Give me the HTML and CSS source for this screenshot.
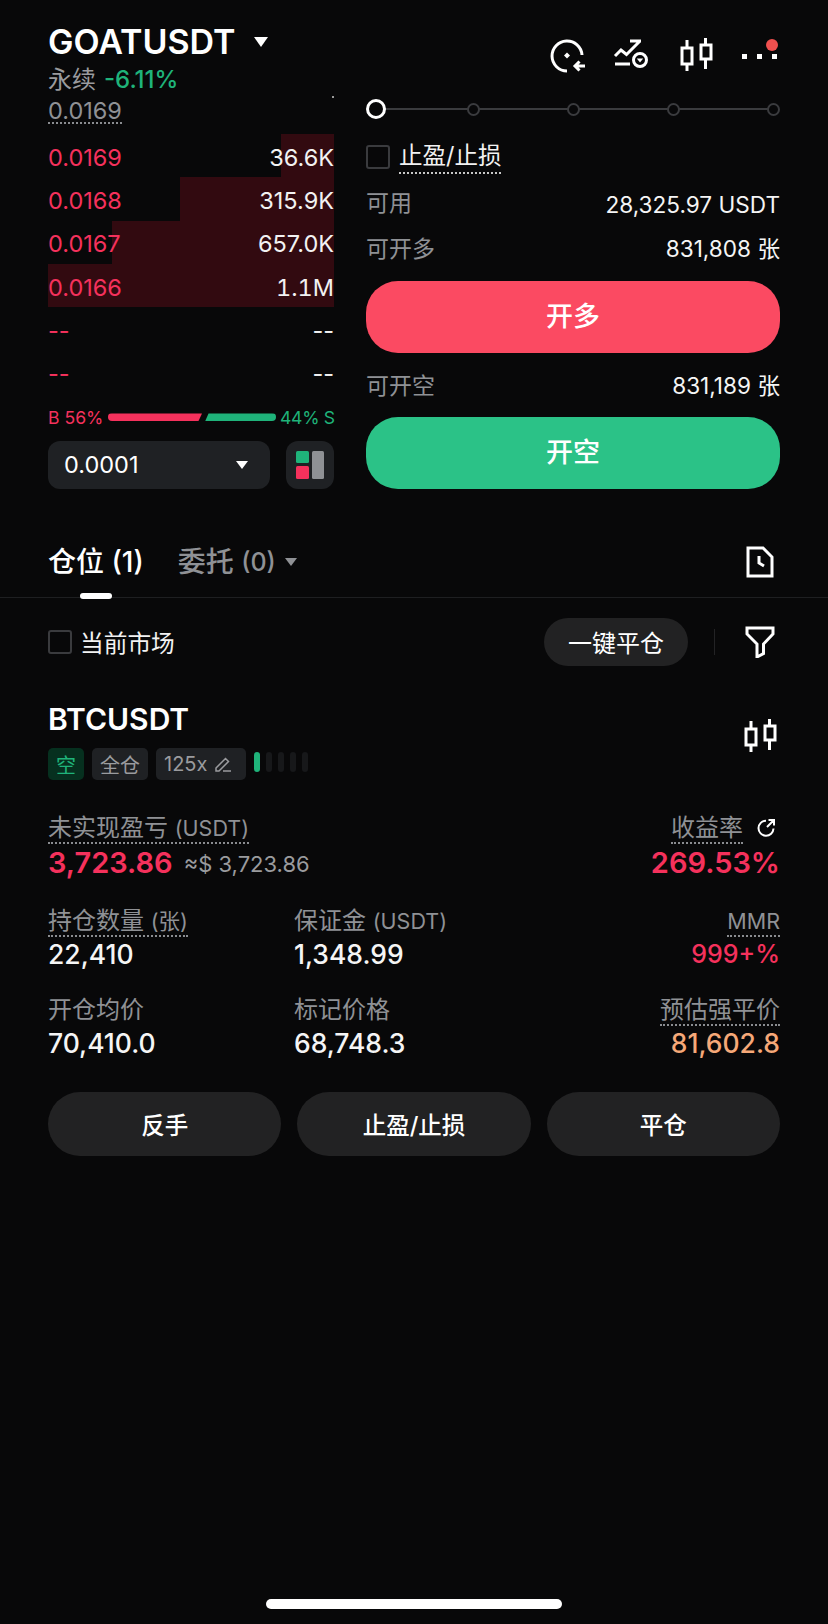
FILE: index.html
```html
<!DOCTYPE html>
<html lang="zh-CN">
<head>
<meta charset="utf-8">
<title>GOATUSDT</title>
<link rel="stylesheet" href="styles.css">
</head>
<body>
<div class="page">
  <header class="head">
    <div class="head-left">
      <div class="symbol"><span>GOATUSDT</span><i class="caret caret-lg"></i></div>
      <div class="sub"><span class="sub-label">永续</span><span class="sub-pct">-6.11%</span></div>
    </div>
    <div class="head-icons">
      <svg class="ic ic-1" viewBox="0 0 36 36"><path d="M33 17A15 15 0 1 0 18 33"/><path class="fill" d="M18 14.500l3 3-3 3-3-3z"/><path d="M36 28H26M30.500 23.500L26 28l4.500 4.500"/></svg>
      <svg class="ic ic-2" viewBox="0 0 36 36"><path d="M2 18l6-6 5.500 4.500L27 3M17 3h11M2 26h15"/><circle cx="27" cy="22" r="6.500"/><path class="fill" d="M23.800 20.500h6.400L27 24.500z"/></svg>
      <svg class="ic ic-3" viewBox="0 0 36 36"><path d="M3 10h10v16H3zM8 2v8M8 26v7M22 7h10v14H22zM26.500 0v7M26.500 21v10"/></svg>
      <div class="more"><i></i><i></i><i></i><b class="more-dot"></b></div>
    </div>
  </header>

  <section class="trade">
    <div class="book">
      <div class="book-top"><span class="dotted price-top">0.0169</span><span class="speck"></span></div>
      <div class="row"><span class="bar" style="width:53px"></span><span class="p">0.0169</span><span class="q">36.6K</span></div>
      <div class="row"><span class="bar" style="width:154px"></span><span class="p">0.0168</span><span class="q">315.9K</span></div>
      <div class="row"><span class="bar" style="width:222px"></span><span class="p">0.0167</span><span class="q">657.0K</span></div>
      <div class="row"><span class="bar" style="width:286px"></span><span class="p">0.0166</span><span class="q q-tab">1.1M</span></div>
      <div class="row"><span class="p">--</span><span class="q">--</span></div>
      <div class="row"><span class="p">--</span><span class="q">--</span></div>
      <div class="ratio">
        <span class="ratio-b">B 56%</span>
        <span class="ratio-bar ratio-red"></span>
        <span class="ratio-bar ratio-green"></span>
        <span class="ratio-s">44% S</span>
      </div>
      <div class="book-ctl">
        <div class="select"><span>0.0001</span><i class="caret caret-sm"></i></div>
        <div class="toggle">
          <div class="toggle-col"><i class="t-green"></i><i class="t-red"></i></div>
          <i class="t-grey"></i>
        </div>
      </div>
    </div>

    <div class="form">
      <div class="slider">
        <span class="handle"></span>
        <span class="tick"></span><span class="tick"></span><span class="tick"></span><span class="tick"></span>
      </div>
      <div class="tp"><span class="check"></span><span class="dotted tp-text">止盈/止损</span></div>
      <div class="kv kv-a"><span class="k">可用</span><span class="v">28,325.97 USDT</span></div>
      <div class="kv kv-b"><span class="k">可开多</span><span class="v">831,808 张</span></div>
      <div class="cta cta-long">开多</div>
      <div class="kv kv-c"><span class="k">可开空</span><span class="v">831,189 张</span></div>
      <div class="cta cta-short">开空</div>
    </div>
  </section>

  <nav class="tabs">
    <div class="tab tab-on">仓位 (1)<span class="tab-mark"></span></div>
    <div class="tab">委托&nbsp;<span class="tab-count">(0)</span><i class="caret caret-grey"></i></div>
    <svg class="ic ic-doc" viewBox="0 0 28 32"><path d="M2 2h15l9 9v19H2z"/><path d="M13 10v7l5 3"/></svg>
  </nav>

  <div class="filter">
    <span class="check"></span><span class="filter-label">当前市场</span>
    <div class="close-all">一键平仓</div>
    <span class="vline"></span>
    <svg class="ic ic-fun" viewBox="0 0 30 32"><path d="M2 2h26v6L18.500 18v9.500L12 31V18L2 8z"/></svg>
  </div>

  <section class="pos">
    <div class="pos-head">
      <div>
        <div class="pos-name">BTCUSDT</div>
        <div class="tags">
          <span class="tag tag-short">空</span>
          <span class="tag">全仓</span>
          <span class="tag tag-lev">125x
            <svg class="ic-pen" viewBox="0 0 18 18"><path d="M2 13L11.500 3.500l3 3L5 16H2zM9 16h8"/></svg>
          </span>
          <span class="risk"><i class="on"></i><i></i><i></i><i></i><i></i></span>
        </div>
      </div>
      <svg class="ic ic-3 ic-cand" viewBox="0 0 36 36"><path d="M3 10h10v16H3zM8 2v8M8 26v7M22 7h10v14H22zM26.500 0v7M26.500 21v10"/></svg>
    </div>

    <div class="pnl">
      <div>
        <div class="lbl"><span class="dotted">未实现盈亏 <span class="lat">(USDT)</span></span></div>
        <div class="pnl-val"><span class="big red">3,723.86</span><span class="approx">≈$ 3,723.86</span></div>
      </div>
      <div class="end">
        <div class="lbl"><span class="dotted">收益率</span>
          <svg class="ic-share" viewBox="0 0 20 20"><path d="M17.500 10.500A7.500 7.500 0 1 1 10 2.700M12.500 2H18v5.500M18 2l-7 7"/></svg>
        </div>
        <div class="big red">269.53%</div>
      </div>
    </div>

    <div class="stats">
      <div><div class="lbl"><span class="dotted">持仓数量 <span class="lat">(张)</span></span></div><div class="val">22,410</div></div>
      <div><div class="lbl"><span>保证金 <span class="lat">(USDT)</span></span></div><div class="val">1,348.99</div></div>
      <div class="end"><div class="lbl"><span class="dotted"><span class="lat">MMR</span></span></div><div class="val red">999+%</div></div>
      <div><div class="lbl">开仓均价</div><div class="val">70,410.0</div></div>
      <div><div class="lbl">标记价格</div><div class="val">68,748.3</div></div>
      <div class="end"><div class="lbl"><span class="dotted">预估强平价</span></div><div class="val orange">81,602.8</div></div>
    </div>

    <div class="actions">
      <div class="act">反手</div>
      <div class="act">止盈/止损</div>
      <div class="act">平仓</div>
    </div>
  </section>

  <div class="home"></div>
</div>
</body>
</html>
```

FILE: styles.css
```css
* { box-sizing: border-box; margin: 0; padding: 0; }
html, body { background: #080809; }
body {
  width: 828px;
  height: 1624px;
  overflow: hidden;
  color: #fff;
  font-family: Inter, "Noto Sans CJK SC", sans-serif;
  font-size: 23.500px;
}
i, b { display: block; }
.page { height: 1624px; display: flex; flex-direction: column; }

.caret { width: 0; height: 0; border-style: solid; border-color: #fff transparent transparent; }
.caret-lg { border-width: 10px 7.500px 0; }
.caret-sm { border-width: 8px 6px 0; }
.caret-grey { border-width: 8px 6.500px 0; border-top-color: #8f9195; margin-left: 9px; }

.ic { fill: none; stroke: #fff; stroke-width: 3; display: block; flex: none; }
.ic .fill { fill: #fff; stroke: none; }

.dotted { border-bottom: 2px dotted #8a8c90; display: inline-block; }
.lat { font-size: 21.500px; }

/* header */
.head { height: 96px; padding: 20px 48px 0; display: flex; justify-content: space-between; }
.head-left { padding-top: 2px; }
.symbol { display: flex; align-items: center; gap: 18px; font-size: 34px; font-weight: 600; line-height: 40px; }
.sub { display: flex; align-items: center; gap: 8px; line-height: 30px; margin-top: 3px; }
.sub-label { color: #9a9b9e; font-size: 24px; }
.sub-pct { color: #1fb37a; font-size: 24px; font-weight: 500; }
.head-icons { display: flex; align-items: center; height: 72px; position: relative; margin-right: 2px; }
.ic-1 { width: 36px; height: 36px; margin-right: 28px; }
.ic-2 { width: 36px; height: 36px; margin-right: 30px; }
.ic-3 { width: 36px; height: 36px; }
.more { display: flex; gap: 10px; margin-left: 27px; position: relative; width: 36px; }
.more i { width: 5px; height: 5px; background: #fff; }
.more-dot { position: absolute; width: 12px; height: 12px; border-radius: 50%; background: #f0504f; right: 0; top: -15px; }

/* trade */
.trade { display: flex; justify-content: space-between; padding: 0 48px; height: 393px; }
.book { width: 286px; display: flex; flex-direction: column; }
.book-top { height: 38px; display: flex; justify-content: space-between; align-items: flex-start; color: #8f9195; position: relative; flex: none; }
.price-top { padding-top: 3px; line-height: 23px; height: 28px; }
.speck { width: 2px; height: 2px; background: #999; }
.row { height: 43.330px; flex: none; padding-top: 3px; display: flex; justify-content: space-between; align-items: center; position: relative; }
.row .bar { position: absolute; right: 0; top: 0; bottom: 0; background: #320a10; }
.row .p { color: #f5315c; position: relative; }
.row .q { color: #f2f2f2; position: relative; }
.row .q-tab { font-feature-settings: "tnum"; }
.ratio { height: 47px; flex: none; display: flex; align-items: center; font-size: 17.600px; }
.ratio-b { color: #f5315c; width: 60px; white-space: nowrap; }
.ratio-s { color: #1fb37a; width: 54px; text-align: right; margin-left: auto; white-space: nowrap; letter-spacing: -0.3px; }
.ratio-bar { height: 8px; display: block; }
.ratio-red { width: 94px; background: #f5315c; border-radius: 4px 0 0 4px; clip-path: polygon(0 0, 100% 0, 96% 100%, 0 100%); }
.ratio-green { width: 71px; margin-left: 3px; background: #1fb37a; border-radius: 0 4px 4px 0; clip-path: polygon(5% 0, 100% 0, 100% 100%, 0 100%); }
.book-ctl { display: flex; justify-content: space-between; }
.select { width: 222px; height: 48px; background: #1f2124; border-radius: 12px; padding: 0 22px 0 16px; font-size: 23.500px; display: flex; align-items: center; justify-content: space-between; }
.toggle { width: 48px; height: 48px; background: #1f2124; border-radius: 12px; display: flex; gap: 3px; padding: 10px; }
.toggle-col { display: flex; flex-direction: column; gap: 3px; width: 13px; }
.toggle-col i { flex: 1; border-radius: 1.500px; }
.t-green { background: #1fb37a; }
.t-red { background: #f5315c; }
.t-grey { width: 13px; background: #8f9195; border-radius: 1.500px; }

.form { width: 414px; display: flex; flex-direction: column; }
.slider { height: 26px; display: flex; align-items: center; justify-content: space-between; position: relative; }
.slider::before { content: ""; position: absolute; left: 4px; right: 4px; top: 12px; height: 2px; background: #3a3b3e; }
.handle { width: 20px; height: 20px; margin-right: -6px; border-radius: 50%; border: 3px solid #fff; background: #080809; position: relative; }
.tick { width: 13px; height: 13px; border-radius: 50%; border: 2px solid #3a3b3e; background: #080809; position: relative; }
.tp { display: flex; align-items: center; height: 38px; margin-top: 16px; gap: 9px; }
.check { width: 24px; height: 24px; border: 2px solid #3a3b3e; border-radius: 3px; display: block; flex: none; }
.tp-text { font-size: 23.500px; line-height: 30px; height: 33px; color: #f2f2f2; border-bottom-color: #c8c8c8; }
.kv { display: flex; justify-content: space-between; align-items: center; height: 46px; font-size: 22.600px; }
.kv-a { margin-top: 2px; }
.kv-a .v { padding-top: 6px; }
.kv-b { margin-bottom: 11px; }
.kv-c { margin-top: 8px; margin-bottom: 10px; }
.k { color: #8f9195; font-size: 23px; }
.v { color: #f5f5f5; }
.cta { height: 72px; border-radius: 32px; padding-bottom: 6px; display: flex; align-items: center; justify-content: center; font-size: 27px; font-weight: 500; }
.cta-long { background: #fb4a62; }
.cta-short { background: #2bc287; }

/* tabs */
.tabs { height: 109px; padding: 54px 48px 0; display: flex; align-items: flex-start; border-bottom: 1px solid #1e1f21; position: relative; }
.tab { font-size: 28px; font-weight: 500; color: #8f9195; line-height: 38px; display: flex; align-items: center; }
.tab-count { font-size: 25px; }
.tab-on { color: #fff; margin-right: 34px; position: relative; }
.tab-mark { position: absolute; left: 32px; top: 50px; width: 32px; height: 6px; background: #fff; border-radius: 3px; }
.ic-doc { width: 28px; height: 32px; margin-left: auto; margin-right: 6px; margin-top: 3px; }

/* filter */
.filter { height: 87px; padding: 0 48px; display: flex; align-items: center; }
.filter-label { margin-left: 8px; font-size: 23.700px; color: #f2f2f2; }
.close-all { margin-left: auto; width: 144px; height: 48px; border-radius: 24px; background: #222223; display: flex; align-items: center; justify-content: center; font-size: 24px; }
.vline { width: 1px; height: 26px; background: #232325; margin-left: 26px; }
.ic-fun { width: 30px; height: 32px; margin-left: 30px; margin-right: 5px; }

/* position */
.pos { padding: 0 48px; }
.pos-head { display: flex; justify-content: space-between; align-items: flex-start; padding-top: 14px; }
.pos-name { font-size: 30px; font-weight: 600; line-height: 40px; }
.tags { display: flex; gap: 8px; margin-top: 9px; align-items: center; }
.tag { height: 32px; padding: 0 8px; background: #1f2124; border-radius: 5px; color: #9a9b9e; font-size: 20px; display: flex; align-items: center; gap: 7px; }
.tag-short { background: #06301f; color: #1fb37a; padding: 0 8px; }
.tag-lev { padding-right: 14px; }
.ic-pen { width: 18px; height: 18px; fill: none; stroke: #9a9b9e; stroke-width: 1.500; }
.risk { display: flex; gap: 6px; padding-bottom: 4px; }
.risk i { width: 6px; height: 20px; border-radius: 3px; background: #17181a; }
.risk i.on { background: #1fb37a; }
.ic-cand { margin-top: 20px; margin-right: 1px; }

.pnl { display: flex; justify-content: space-between; margin-top: 34px; }
.end { text-align: right; }
.lbl { color: #8f9195; font-size: 24px; line-height: 28px; height: 31px; display: flex; align-items: flex-start; gap: 13px; white-space: nowrap; }
.end .lbl { justify-content: flex-end; }
.lbl .dotted { height: 30px; }
.ic-share { width: 20px; height: 20px; fill: none; stroke: #fff; stroke-width: 2; margin: 4px 4px 0 0; }
.pnl-val { display: flex; align-items: center; gap: 11px; }
.big { font-size: 29px; font-weight: 600; line-height: 36px; }
.approx { font-size: 22px; color: #9a9b9e; padding-top: 2px; }
.red { color: #f5315c; }
.orange { color: #f6a878; }

.stats { display: grid; grid-template-columns: 246px 1fr auto; row-gap: 26px; margin-top: 26px; }
.val { font-size: 26.500px; font-weight: 500; line-height: 32px; color: #f5f5f5; }
.val.red { color: #f5315c; font-size: 25px; }
.val.orange { color: #f6a878; }

.actions { display: flex; gap: 16px; margin-top: 33px; }
.act { flex: 1; height: 64px; border-radius: 32px; background: #222223; display: flex; align-items: center; justify-content: center; font-size: 23.500px; font-weight: 500; }

.home { width: 296px; height: 10px; border-radius: 5px; background: #fff; margin: auto auto 15px; }
```
